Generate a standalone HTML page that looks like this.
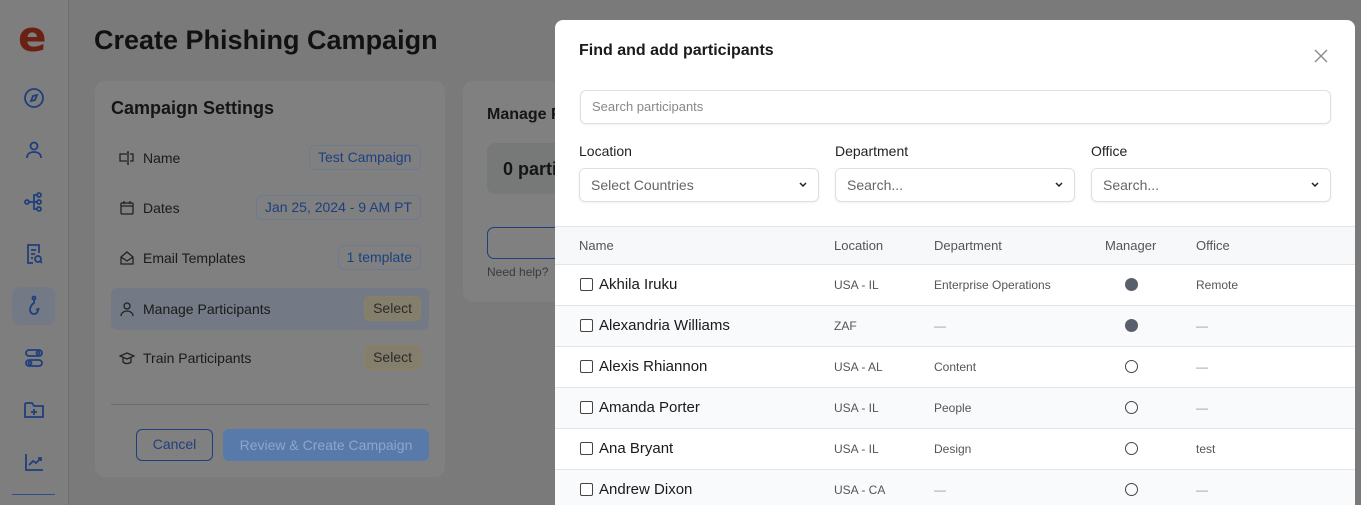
<!DOCTYPE html>
<html><head><meta charset="utf-8"><style>
*{box-sizing:border-box;margin:0;padding:0}
html,body{width:1361px;height:505px;overflow:hidden}
body{background:#7a7a7b;font-family:"Liberation Sans",sans-serif;position:relative;color:#111}
.abs{position:absolute}
.side{left:0;top:0;width:69px;height:505px;background:#7e7e7f;border-right:1px solid #6f6f70}
.ic{position:absolute;left:22px;width:24px;height:24px}
.card{background:#808080;border-radius:10px;position:absolute}
.row{position:absolute;left:111px;width:318px;height:42px;font-size:14px;color:#1a1a1a;display:flex;align-items:center}
.row svg{margin-left:8px;margin-right:8px}
.pill{position:absolute;right:8px;top:8px;height:25px;border:1px solid #6e7a90;border-radius:6px;font-size:14px;color:#1d3f80;padding:0 8px;line-height:23px}
.pill.y{border-color:#8c8060;color:#2a2a2a;background:#847f6c}
.modal{left:555px;top:20px;width:800px;height:485px;background:#fff;border-radius:8px 8px 0 0;overflow:hidden}
.lbl{font-size:14px;color:#222}
.inp{position:absolute;border:1px solid #dcdfe4;border-radius:6px;height:34px;font-size:14px;color:#666;padding-left:11px;line-height:32px;box-shadow:0 1px 2px rgba(0,0,0,.06)}
.chev{position:absolute;right:10px;top:11px}
.tr{position:absolute;left:0;width:800px;height:41px;border-bottom:1px solid #e3e5e9}
.tr span{position:absolute;top:0;line-height:40px;font-size:12px;color:#555}
.tr .nm{left:44px;font-size:15px;color:#1a1a1a}
.cb{position:absolute;left:25px;top:13px;width:13px;height:13px;border:1px solid #444;border-radius:2px;background:#fff}
.dot{position:absolute;left:570px;top:13px;width:13px;height:13px;border-radius:50%}
</style></head><body>
<div class="abs side">
 <div class="abs" style="left:18px;top:16px;font-size:42px;font-weight:bold;color:#6b2014;line-height:42px;font-family:'DejaVu Sans',sans-serif">e</div>
 <svg class="ic" style="top:86px" viewBox="0 0 24 24" fill="none" stroke="#1e3f7c" stroke-width="1.8"><circle cx="12" cy="12" r="9"/><path d="M15 9l-2 5-4 1 2-5z"/></svg>
 <svg class="ic" style="top:138px" viewBox="0 0 24 24" fill="none" stroke="#1e3f7c" stroke-width="1.8"><circle cx="12" cy="8" r="3.5"/><path d="M5 20c0-4 3-6 7-6s7 2 7 6"/></svg>
 <svg class="ic" style="top:190px" viewBox="0 0 24 24" fill="none" stroke="#1e3f7c" stroke-width="1.8"><circle cx="5" cy="12" r="2"/><circle cx="17" cy="5" r="2"/><circle cx="17" cy="12" r="2"/><circle cx="17" cy="19" r="2"/><path d="M7 12h8M12 12V5h3M12 12v7h3"/></svg>
 <svg class="ic" style="top:242px" viewBox="0 0 24 24" fill="none" stroke="#1e3f7c" stroke-width="1.8"><path d="M11 21H6V3h11v8"/><path d="M9 8h5M9 12h4M9 16h2"/><circle cx="16" cy="17" r="3"/><path d="M18 19l2 2"/></svg>
 <div class="abs" style="left:12px;top:287px;width:43px;height:38px;border-radius:8px;background:#737985"></div>
 <svg class="ic" style="top:294px" viewBox="0 0 24 24" fill="none" stroke="#1e3f7c" stroke-width="1.8"><circle cx="12" cy="4" r="1.5"/><path d="M12 6v3c-3 2-4 4-4 7a4 4 0 008 0"/><path d="M14 15l2 1 1-2"/></svg>
 <svg class="ic" style="top:346px" viewBox="0 0 24 24" fill="none" stroke="#1e3f7c" stroke-width="1.8"><rect x="4" y="4" width="16" height="6" rx="3"/><rect x="4" y="14" width="16" height="6" rx="3"/><circle cx="16" cy="7" r="1.5"/><circle cx="8" cy="17" r="1.5"/></svg>
 <svg class="ic" style="top:398px" viewBox="0 0 24 24" fill="none" stroke="#1e3f7c" stroke-width="1.8"><path d="M3 6v13h18V8h-9l-2-3H4z"/><path d="M12 11v6M9 14h6"/></svg>
 <svg class="ic" style="top:450px" viewBox="0 0 24 24" fill="none" stroke="#1e3f7c" stroke-width="1.8"><path d="M4 4v16h17"/><path d="M7 15l4-4 3 2 5-5M16 8h3v3"/></svg>
 <div class="abs" style="left:12px;top:494px;width:43px;height:1px;background:#2f4f86"></div>
</div>
<div class="abs" style="left:94px;top:25px;font-size:27px;font-weight:bold;color:#111">Create Phishing Campaign</div>
<div class="card" style="left:95px;top:81px;width:350px;height:396px"></div>
<div class="abs" style="left:111px;top:98px;font-size:18px;font-weight:bold;color:#151515">Campaign Settings</div>
<div class="row" style="top:137px"><svg width="16" height="16" viewBox="0 0 16 16" fill="none" stroke="#222" stroke-width="1.3"><path d="M8 4H1v7h7M11 4h3v7h-3M9 2v12M8 2h2M8 14h2"/></svg>Name<div class="pill" style="width:112px">Test Campaign</div></div>
<div class="row" style="top:187px"><svg width="16" height="16" viewBox="0 0 16 16" fill="none" stroke="#222" stroke-width="1.3"><rect x="2" y="3" width="12" height="11" rx="1"/><path d="M2 6h12M5 1v3M11 1v3"/></svg>Dates<div class="pill">Jan 25, 2024 - 9 AM PT</div></div>
<div class="row" style="top:237px"><svg width="16" height="16" viewBox="0 0 16 16" fill="none" stroke="#222" stroke-width="1.3"><path d="M2 7l6-5 6 5v7H2zM2 7l6 4 6-4"/></svg>Email Templates<div class="pill">1 template</div></div>
<div class="row" style="top:288px;background:#737985;border-radius:6px"><svg width="16" height="16" viewBox="0 0 16 16" fill="none" stroke="#222" stroke-width="1.3"><circle cx="8" cy="5" r="3"/><path d="M2 15c0-3 3-5 6-5s6 2 6 5"/></svg>Manage Participants<div class="pill y">Select</div></div>
<div class="row" style="top:337px"><svg width="16" height="16" viewBox="0 0 16 16" fill="none" stroke="#222" stroke-width="1.3"><path d="M1 6l7-3 7 3-7 3zM4 8v4c2 2 6 2 8 0V8"/></svg>Train Participants<div class="pill y">Select</div></div>
<div class="abs" style="left:111px;top:404px;width:318px;height:1px;background:#6c6c6c"></div>
<div class="abs" style="left:136px;top:429px;width:77px;height:32px;border:1.5px solid #1e3f80;border-radius:6px;font-size:14px;color:#1e3f80;text-align:center;line-height:29px">Cancel</div>
<div class="abs" style="left:223px;top:429px;width:206px;height:32px;background:#577aab;border-radius:6px;font-size:14px;color:#8ea6c8;text-align:center;line-height:32px">Review &amp; Create Campaign</div>
<div class="card" style="left:463px;top:81px;width:120px;height:221px"></div>
<div class="abs" style="left:487px;top:106px;font-size:16px;font-weight:bold;color:#151515;white-space:nowrap">Manage Participants</div>
<div class="abs" style="left:487px;top:143px;width:100px;height:51px;background:#777878;border-radius:8px;font-size:18px;font-weight:bold;color:#151515;padding:16px 0 0 16px;white-space:nowrap;overflow:hidden">0 participants</div>
<div class="abs" style="left:487px;top:227px;width:100px;height:32px;border:1.5px solid #1e3f80;border-radius:7px"></div>
<div class="abs" style="left:487px;top:265px;font-size:12px;color:#3a3a3a;white-space:nowrap">Need help?</div>

<div class="abs modal">
 <div class="abs" style="left:24px;top:22px;font-size:16px;font-weight:bold;color:#1a1a1a">Find and add participants</div>
 <svg class="abs" style="left:759px;top:29px" width="14" height="14" viewBox="0 0 14 14" stroke="#888" stroke-width="1.3"><path d="M1 1l12 12M13 1L1 13"/></svg>
 <div class="inp" style="left:25px;top:70px;width:751px;color:#888;font-size:13px">Search participants</div>
 <div class="abs lbl" style="left:24px;top:123px">Location</div>
 <div class="abs lbl" style="left:280px;top:123px">Department</div>
 <div class="abs lbl" style="left:536px;top:123px">Office</div>
 <div class="inp" style="left:24px;top:148px;width:240px">Select Countries<svg class="chev" width="10" height="10" viewBox="0 0 10 10" fill="none" stroke="#222" stroke-width="1.5"><path d="M2 3l3 3 3-3"/></svg></div>
 <div class="inp" style="left:280px;top:148px;width:240px">Search...<svg class="chev" width="10" height="10" viewBox="0 0 10 10" fill="none" stroke="#222" stroke-width="1.5"><path d="M2 3l3 3 3-3"/></svg></div>
 <div class="inp" style="left:536px;top:148px;width:240px">Search...<svg class="chev" width="10" height="10" viewBox="0 0 10 10" fill="none" stroke="#222" stroke-width="1.5"><path d="M2 3l3 3 3-3"/></svg></div>
 <div class="tr" style="top:206px;height:39px;background:#f7f8fa;border-top:1px solid #e3e5e9">
  <span style="left:24px;line-height:37px;font-size:13px;color:#555">Name</span><span style="left:279px;line-height:37px;font-size:13px">Location</span><span style="left:379px;line-height:37px;font-size:13px">Department</span><span style="left:550px;line-height:37px;font-size:13px">Manager</span><span style="left:641px;line-height:37px;font-size:13px">Office</span></div>
 <div class="tr" style="top:245px"><div class="cb"></div><span class="nm">Akhila Iruku</span><span style="left:279px">USA - IL</span><span style="left:379px">Enterprise Operations</span><div class="dot" style="background:#5a606b"></div><span style="left:641px">Remote</span></div>
 <div class="tr" style="top:286px;background:#f9fafb"><div class="cb"></div><span class="nm">Alexandria Williams</span><span style="left:279px">ZAF</span><span style="left:379px;color:#999">—</span><div class="dot" style="background:#5a606b"></div><span style="left:641px;color:#999">—</span></div>
 <div class="tr" style="top:327px"><div class="cb"></div><span class="nm">Alexis Rhiannon</span><span style="left:279px">USA - AL</span><span style="left:379px">Content</span><div class="dot" style="border:1px solid #444"></div><span style="left:641px;color:#999">—</span></div>
 <div class="tr" style="top:368px;background:#f9fafb"><div class="cb"></div><span class="nm">Amanda Porter</span><span style="left:279px">USA - IL</span><span style="left:379px">People</span><div class="dot" style="border:1px solid #444"></div><span style="left:641px;color:#999">—</span></div>
 <div class="tr" style="top:409px"><div class="cb"></div><span class="nm">Ana Bryant</span><span style="left:279px">USA - IL</span><span style="left:379px">Design</span><div class="dot" style="border:1px solid #444"></div><span style="left:641px">test</span></div>
 <div class="tr" style="top:450px;background:#f9fafb"><div class="cb"></div><span class="nm">Andrew Dixon</span><span style="left:279px">USA - CA</span><span style="left:379px;color:#999">—</span><div class="dot" style="border:1px solid #444"></div><span style="left:641px;color:#999">—</span></div>
</div>
</body></html>
